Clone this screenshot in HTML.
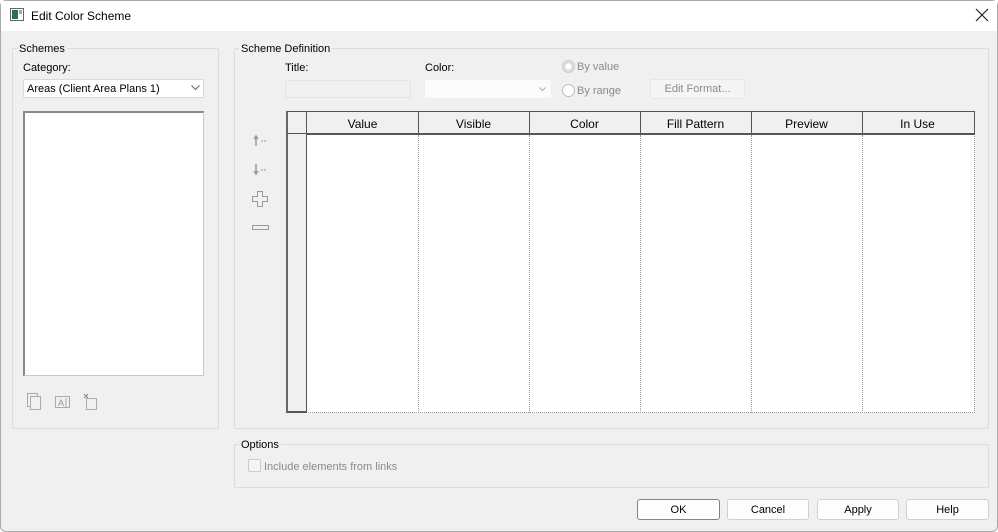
<!DOCTYPE html>
<html><head><style>
*{box-sizing:border-box;margin:0;padding:0}
body{width:998px;height:532px;overflow:hidden;background:#fff;font-family:"Liberation Sans",sans-serif;font-size:11px;color:#000;position:relative}
.a{position:absolute}
.win{left:0;top:0;width:998px;height:532px;background:#f0f0f0;border-radius:6px;overflow:hidden;box-shadow:inset 0 0 0 1px #aaa}
.tb{left:1px;top:1px;width:996px;height:30px;background:#fff}
.grp{border:1px solid #dcdcdc;border-radius:2px}
.lbl{background:#f0f0f0;padding:0 2px;color:#000}
.dis{color:#8a8a8a}
.btn{background:#fdfdfd;border:1px solid #d0d0d0;border-radius:3px;text-align:center;font-size:11px}
.col{border-left:1px dotted #999}
</style></head><body>
<div class="a win">
<div class="a tb"></div>
<svg class="a" style="left:10px;top:8px" width="15" height="14"><rect x="0.5" y="0.5" width="13" height="12" fill="#fff" stroke="#666"/><rect x="2" y="2" width="6" height="9" fill="#2f6b5e"/><rect x="9" y="2" width="3" height="4" fill="#8fb0c8"/></svg>
<div class="a" style="left:31px;top:9px;font-size:12px">Edit Color Scheme</div>
<svg class="a" style="left:975px;top:8px" width="14" height="14"><path d="M1 1L13 13M13 1L1 13" stroke="#222" stroke-width="1.2"/></svg>

<div class="a grp" style="left:12px;top:48px;width:207px;height:381px"></div>
<div class="a lbl" style="left:17px;top:43px">Schemes</div>
<div class="a" style="left:23px;top:62px">Category:</div>
<div class="a" style="left:23px;top:79px;width:181px;height:19px;background:#fff;border:1px solid #d9d9d9;border-radius:2px;padding:3px 0 0 3px">Areas (Client Area Plans 1)</div>
<svg class="a" style="left:191px;top:85px" width="9" height="6"><path d="M0.5 0.5L4.5 4.5L8.5 0.5" stroke="#666" fill="none"/></svg>
<div class="a" style="left:23px;top:111px;width:181px;height:265px;background:#fff;border:1px solid #c8c8c8;border-top:2px solid #888;border-left:2px solid #888"></div>
<svg class="a" style="left:26px;top:392px" width="75" height="20" fill="none" stroke="#aaa"><rect x="1.5" y="1.5" width="10" height="13"/><rect x="4.5" y="4.5" width="10" height="13" fill="#f0f0f0"/><rect x="29.5" y="4.5" width="14" height="11"/><text x="32" y="14" font-size="9" fill="#999" stroke="none" font-family="Liberation Sans">A</text><path d="M40 6v9"/><path d="M58 2l4 4M62 2l-4 4" stroke="#888"/><rect x="60.5" y="6.5" width="10" height="11"/></svg>

<div class="a grp" style="left:234px;top:48px;width:755px;height:381px"></div>
<div class="a lbl" style="left:239px;top:43px">Scheme Definition</div>
<div class="a" style="left:285px;top:62px">Title:</div>
<div class="a" style="left:285px;top:80px;width:126px;height:18px;border:1px solid #e4e4e4"></div>
<div class="a" style="left:425px;top:62px">Color:</div>
<div class="a" style="left:425px;top:80px;width:126px;height:18px;background:#fbfbfb"></div>
<svg class="a" style="left:539px;top:87px" width="7" height="5"><path d="M0.5 0.5L3.5 3.5L6.5 0.5" stroke="#aaa" fill="none"/></svg>
<svg class="a" style="left:562px;top:60px" width="14" height="40"><circle cx="6.5" cy="6.5" r="6" fill="#ddd" stroke="#ccc"/><circle cx="6.5" cy="6.5" r="3" fill="#fff"/><circle cx="6.5" cy="30.5" r="6" fill="#fff" stroke="#bbb"/></svg>
<div class="a dis" style="left:577px;top:61px">By value</div>
<div class="a dis" style="left:577px;top:85px">By range</div>
<div class="a btn dis" style="left:650px;top:79px;width:95px;height:20px;border-color:#e6e6e6;background:#f5f5f5;line-height:19px">Edit Format...</div>

<svg class="a" style="left:250px;top:133px" width="22" height="100" fill="none" stroke="#999"><path d="M6 3v10M4 6l2-3 2 3" stroke-width="1.5"/><path d="M11 8h6" stroke-dasharray="2 1"/><path d="M6 31v10M4 38l2 3 2-3" stroke-width="1.5"/><path d="M11 37h6" stroke-dasharray="2 1"/><path d="M7.5 58.5h5v5h5v5h-5v5h-5v-5h-5v-5h5z"/><rect x="2.5" y="92.5" width="16" height="4"/></svg>

<div class="a" style="left:286px;top:111px;width:689px;height:302px;background:#fff;border-left:2px solid #666;border-bottom:1px dotted #999;border-right:1px dotted #999"></div>
<div class="a" style="left:286px;top:111px;width:689px;height:24px;background:#f0f0f0;border:1px solid #555;border-left:2px solid #666;border-bottom:2px solid #555"></div>
<div class="a" style="left:286px;top:134px;width:21px;height:279px;background:#f0f0f0;border-left:2px solid #666;border-bottom:2px solid #555;border-right:1px solid #555"></div>
<div class="a" style="left:306px;top:111px;width:1px;height:24px;background:#555"></div>
<div class="a" style="left:307px;top:117px;width:111px;text-align:center;font-size:12px">Value</div>
<div class="a" style="left:418px;top:117px;width:111px;text-align:center;font-size:12px">Visible</div>
<div class="a" style="left:529px;top:117px;width:111px;text-align:center;font-size:12px">Color</div>
<div class="a" style="left:640px;top:117px;width:111px;text-align:center;font-size:12px">Fill Pattern</div>
<div class="a" style="left:751px;top:117px;width:111px;text-align:center;font-size:12px">Preview</div>
<div class="a" style="left:862px;top:117px;width:111px;text-align:center;font-size:12px">In Use</div>
<div class="a" style="left:418px;top:111px;width:1px;height:24px;background:#555"></div>
<div class="a" style="left:529px;top:111px;width:1px;height:24px;background:#555"></div>
<div class="a" style="left:640px;top:111px;width:1px;height:24px;background:#555"></div>
<div class="a" style="left:751px;top:111px;width:1px;height:24px;background:#555"></div>
<div class="a" style="left:862px;top:111px;width:1px;height:24px;background:#555"></div>
<div class="a col" style="left:418px;top:135px;height:278px"></div>
<div class="a col" style="left:529px;top:135px;height:278px"></div>
<div class="a col" style="left:640px;top:135px;height:278px"></div>
<div class="a col" style="left:751px;top:135px;height:278px"></div>
<div class="a col" style="left:862px;top:135px;height:278px"></div>

<div class="a grp" style="left:234px;top:444px;width:755px;height:44px"></div>
<div class="a lbl" style="left:239px;top:439px">Options</div>
<div class="a" style="left:248px;top:459px;width:13px;height:13px;border:1px solid #ccc;border-radius:2px;background:#f5f5f5"></div>
<div class="a dis" style="left:264px;top:461px">Include elements from links</div>

<div class="a btn" style="left:637px;top:499px;width:83px;height:21px;border-color:#4a90d9;line-height:21px">OK</div>
<div class="a btn" style="left:727px;top:499px;width:82px;height:21px;line-height:21px">Cancel</div>
<div class="a btn" style="left:817px;top:499px;width:82px;height:21px;line-height:21px">Apply</div>
<div class="a btn" style="left:906px;top:499px;width:83px;height:21px;line-height:21px">Help</div>
</div>
</body></html>
